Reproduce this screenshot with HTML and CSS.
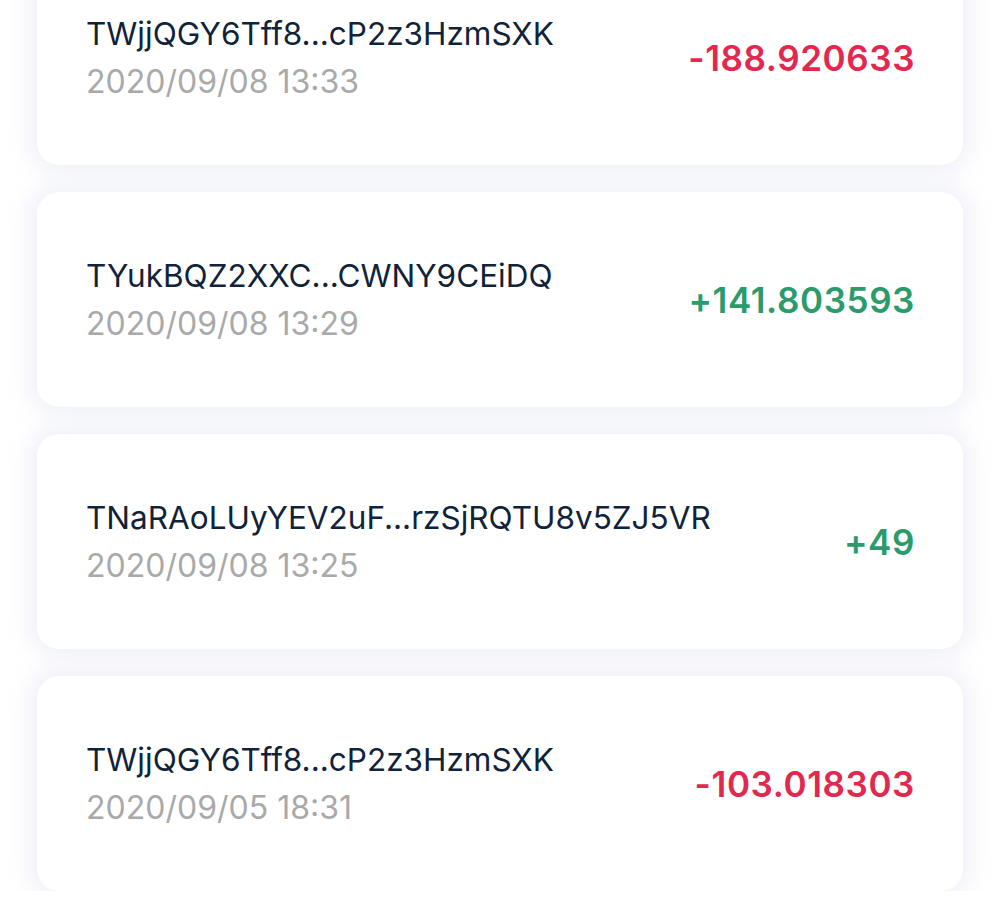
FILE: index.html
```html
<!DOCTYPE html>
<html>
<head>
<meta charset="utf-8">
<link rel="stylesheet" href="styles.css">
</head>
<body>
<div class="list">
  <div class="card">
    <div class="info">
      <div class="addr">TWjjQGY6Tff8...cP2z3HzmSXK</div>
      <div class="date">2020/09/08 13:33</div>
    </div>
    <div class="amount out">-188.920633</div>
  </div>
  <div class="card">
    <div class="info">
      <div class="addr">TYukBQZ2XXC...CWNY9CEiDQ</div>
      <div class="date">2020/09/08 13:29</div>
    </div>
    <div class="amount in">+141.803593</div>
  </div>
  <div class="card">
    <div class="info">
      <div class="addr">TNaRAoLUyYEV2uF...rzSjRQTU8v5ZJ5VR</div>
      <div class="date">2020/09/08 13:25</div>
    </div>
    <div class="amount in">+49</div>
  </div>
  <div class="card">
    <div class="info">
      <div class="addr">TWjjQGY6Tff8...cP2z3HzmSXK</div>
      <div class="date">2020/09/05 18:31</div>
    </div>
    <div class="amount out">-103.018303</div>
  </div>
</div>
</body>
</html>
```
FILE: styles.css
```css
html, body {
  margin: 0;
  padding: 0;
  background: #ffffff;
  overflow: hidden;
}
body {
  font-family: Inter, "Liberation Sans", sans-serif;
}
.list {
  margin-top: -50px;
  padding: 0 37px;
  display: flex;
  flex-direction: column;
  gap: 27px;
}
.card {
  height: 215px;
  box-sizing: border-box;
  background: #ffffff;
  border-radius: 22px;
  box-shadow: 0 0 22px 8px rgba(236, 238, 248, 0.8);
  display: flex;
  align-items: center;
  justify-content: space-between;
  padding: 0 49px;
}
.info {
  display: flex;
  flex-direction: column;
}
.addr {
  font-size: 31.5px;
  line-height: 48px;
  color: #102338;
}
.date {
  font-size: 32px;
  line-height: 48px;
  color: #a9a9a9;
}
.amount {
  font-size: 35px;
  font-weight: 600;
  letter-spacing: 0.6px;
  margin-right: -1px;
}
.out { color: #e2284e; }
.in { color: #2b9b6c; }
```
